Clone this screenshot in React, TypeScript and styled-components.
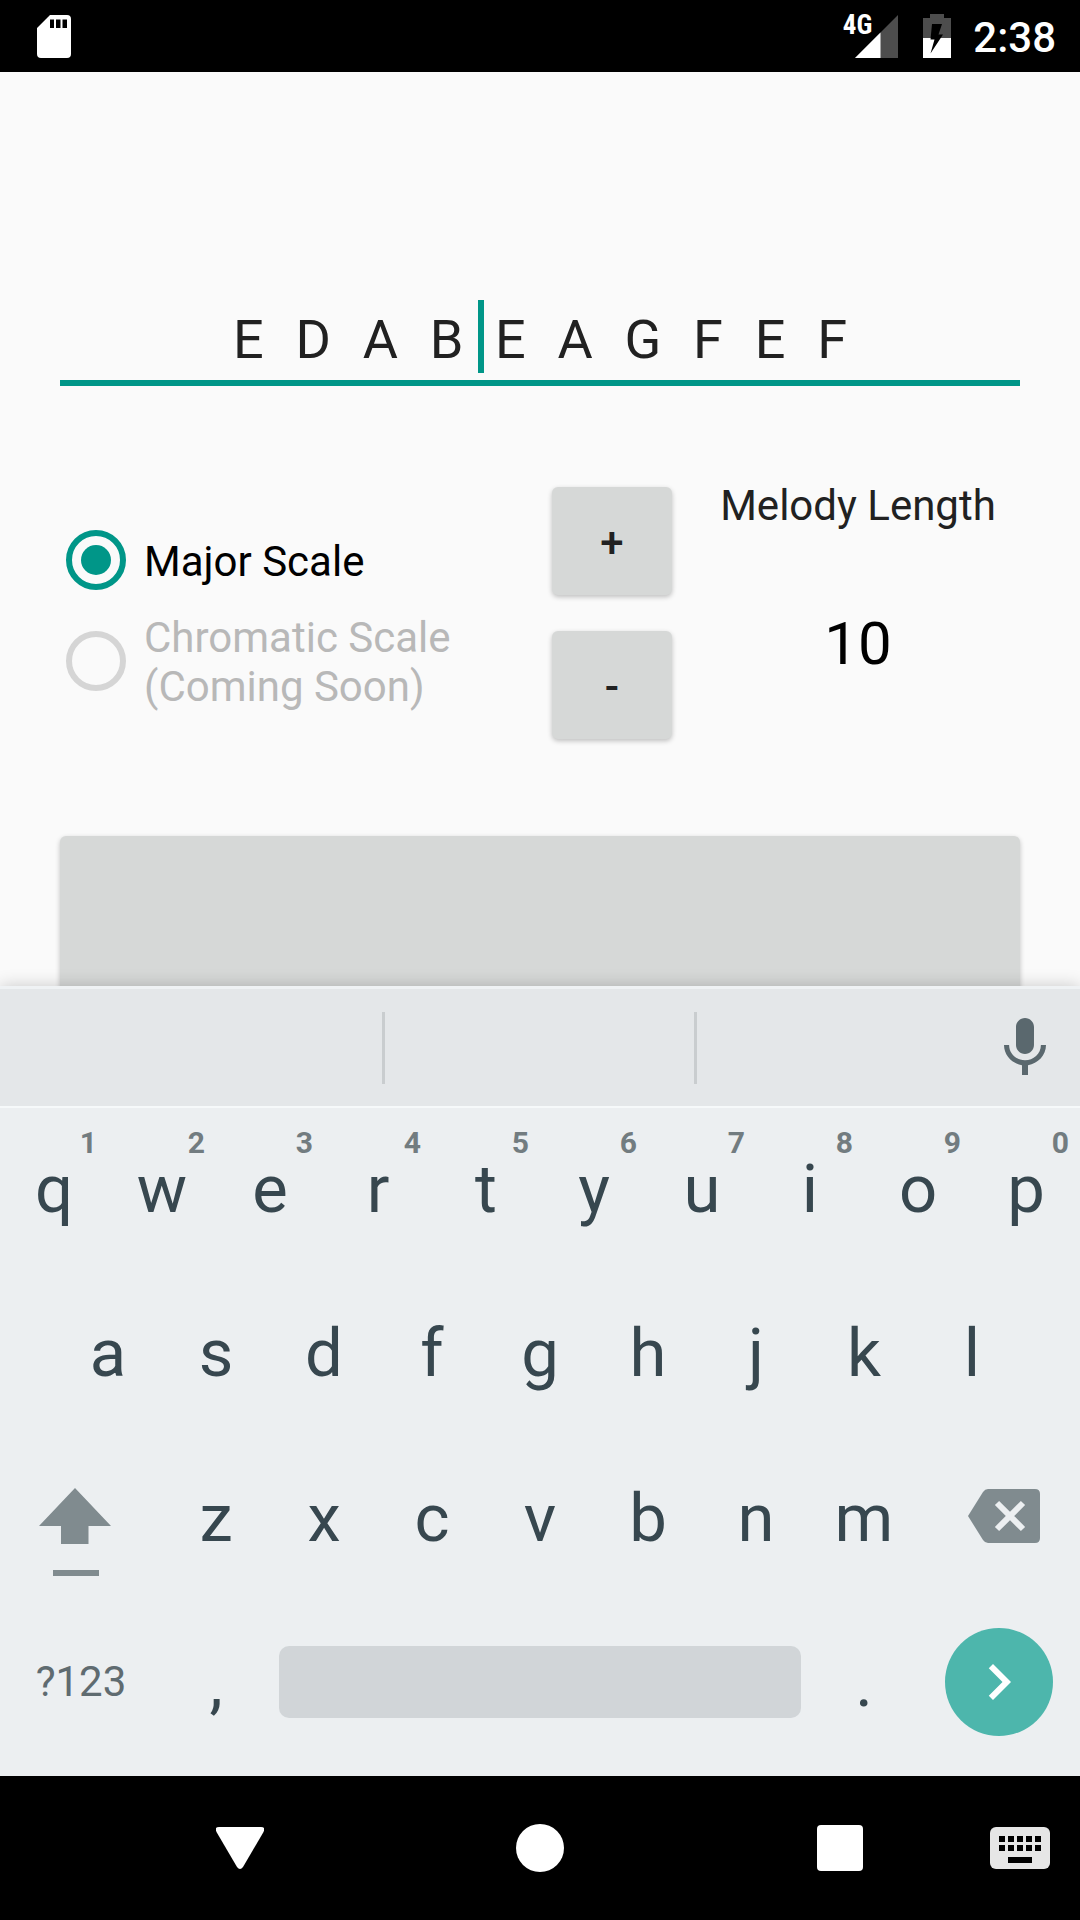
import React from "react";
import styled, { createGlobalStyle } from "styled-components";

const GlobalStyle = createGlobalStyle`
  *, *::before, *::after { box-sizing: border-box; }
  body { margin: 0; background: #fafafa; }
  button, input, output, label { font-family: Roboto, "Noto Sans", sans-serif; }
  button { border: 0; padding: 0; background: none; color: inherit; cursor: pointer; }
  svg { display: block; }
`;

const Screen = styled.div`
  height: 100vh;
  display: flex;
  flex-direction: column;
  overflow: hidden;
  background: #fafafa;
  font-family: Roboto, "Noto Sans", sans-serif;
`;

/* Status bar */
const StatusBar = styled.header`
  flex: none;
  height: 72px;
  padding: 0 24px 0 37px;
  display: flex;
  align-items: center;
  justify-content: space-between;
  background: #000;
  color: #fff;
`;
const StatusIcons = styled.div`
  display: flex;
  align-items: center;
  gap: 24px;
`;
const Signal = styled.div`
  position: relative;
  margin-right: 1px;
`;
const NetworkType = styled.span`
  position: absolute;
  right: 26px;
  top: -4px;
  font-family: "Roboto Condensed", Roboto, sans-serif;
  font-size: 27px;
  line-height: 28px;
  font-weight: 700;
`;
const Clock = styled.time`
  padding-top: 3px;
  margin-left: -2px;
  font-size: 42px;
  line-height: 50px;
  font-weight: 500;
`;

/* App content */
const Content = styled.main`
  flex: 1;
  min-height: 0;
  overflow: hidden;
  padding: 228px 60px 0;
`;
const MelodyField = styled.div`
  position: relative;
  border-bottom: 6px solid #009688;
`;
const MelodyInput = styled.input`
  display: block;
  width: 100%;
  height: 80px;
  padding: 0 0 2px;
  border: 0;
  outline: 0;
  background: transparent;
  color: #212121;
  caret-color: transparent;
  font-size: 54px;
  text-align: center;
`;
const Caret = styled.span`
  position: absolute;
  left: calc(50% - 62px);
  top: 0;
  width: 6px;
  height: 73px;
  background: #009688;
`;
const Controls = styled.section`
  display: grid;
  grid-template-columns: 1fr 120px 324px;
  column-gap: 24px;
  margin-top: 95px;
`;
const ScaleOptions = styled.div`
  display: flex;
  flex-direction: column;
  gap: 3px;
  padding: 31px 0 0 6px;
`;
const ScaleOption = styled.label<{ $off?: boolean }>`
  display: flex;
  align-items: center;
  gap: 18px;
  min-height: 96px;
  color: ${(p) => (p.$off ? "#b8b8b8" : "#000")};
  font-size: 42px;
  line-height: 49px;
`;
const OptionText = styled.span`
  padding-top: 2px;
`;
const Radio = styled.input`
  appearance: none;
  flex: none;
  width: 60px;
  height: 60px;
  margin: 0;
  border: 6px solid #009688;
  border-radius: 50%;
  display: grid;
  place-items: center;
  &:checked::before {
    content: "";
    width: 30px;
    height: 30px;
    border-radius: 50%;
    background: #009688;
  }
  &:disabled { border-color: #d5d5d5; }
`;
const Stepper = styled.div`
  display: flex;
  flex-direction: column;
  gap: 36px;
  padding-top: 6px;
`;
const RaisedButton = styled.button<{ $height: number }>`
  display: block;
  width: 100%;
  height: ${(p) => p.$height}px;
  padding-top: 2px;
  border-radius: 6px;
  background: #d6d8d7;
  box-shadow: 0 2px 5px rgba(0, 0, 0, 0.24);
  color: #212121;
  font-size: 42px;
  font-weight: 500;
`;
const LengthPanel = styled.div`
  display: flex;
  flex-direction: column;
  align-items: center;
  gap: 79px;
`;
const LengthLabel = styled.label`
  color: #212121;
  font-size: 42px;
  line-height: 49px;
`;
const LengthValue = styled.output`
  color: #000;
  font-size: 60px;
  line-height: 70px;
`;
const PlayArea = styled.div`
  margin-top: 97px;
`;

/* Keyboard */
const Keyboard = styled.section`
  flex: none;
  position: relative;
  background: #eceff1;
  box-shadow: 0 0 16px rgba(0, 0, 0, 0.2);
  color: #37474f;
`;
const Suggestions = styled.div`
  display: grid;
  grid-template-columns: 385fr 312fr 383fr;
  align-items: center;
  height: 122px;
  border-top: 3px solid #eff2f4;
  border-bottom: 2px solid #f6f9fa;
  background: #e4e7e9;
`;
const Suggestion = styled.div<{ $last?: boolean }>`
  height: 72px;
  border-right: ${(p) => (p.$last ? "0" : "3px solid #c9cdcf")};
  display: flex;
  justify-content: flex-end;
  padding-right: ${(p) => (p.$last ? "19px" : "0")};
  color: #5a686e;
`;
const Keys = styled.div`
  padding-bottom: 12px;
`;
const KeyRow = styled.div<{ $first?: boolean; $inset?: boolean }>`
  display: flex;
  height: ${(p) => (p.$first ? 161 : 165)}px;
  padding: 0 ${(p) => (p.$inset ? "5%" : "0")} ${(p) => (p.$first ? 2 : 0)}px;
`;
const Key = styled.button<{ $span?: number; $small?: boolean }>`
  position: relative;
  flex: ${(p) => p.$span ?? 2} 1 0;
  min-width: 0;
  display: flex;
  align-items: center;
  justify-content: center;
  padding-top: ${(p) => (p.$small ? 0 : 2)}px;
  font-size: ${(p) => (p.$small ? 42 : 67)}px;
  color: ${(p) => (p.$small ? "#5f6b70" : "#37474f")};
`;
const KeyHint = styled.span`
  position: absolute;
  top: 17px;
  right: 11px;
  color: #727c80;
  font-size: 30px;
  line-height: 36px;
  font-weight: 700;
`;
const SpaceBar = styled.span`
  width: 100%;
  height: 72px;
  margin: 0 9px;
  border-radius: 10px;
  background: #d1d5d8;
`;
const EnterDisc = styled.span`
  display: grid;
  place-items: center;
  width: 108px;
  height: 108px;
  border-radius: 50%;
  background: #4db6ac;
`;

/* Navigation bar */
const NavBar = styled.nav`
  flex: none;
  height: 144px;
  display: grid;
  grid-template-columns: 90px 1fr 1fr 1fr 90px;
  background: #000;
`;
const NavButton = styled.button<{ $start?: boolean }>`
  display: flex;
  align-items: center;
  justify-content: ${(p) => (p.$start ? "flex-start" : "center")};
`;

const SdCardIcon = () => (
  <svg width="34" height="43" viewBox="0 0 34 43" fill="#fff">
    <path
      fillRule="evenodd"
      d="M13 0H30Q34 0 34 4V39Q34 43 30 43H4Q0 43 0 39V13ZM13 4.500V13H17V4.500ZM19 4.500V13H23.500V4.500ZM25.500 4.500V13H30V4.500Z"
    />
  </svg>
);
const SignalIcon = () => (
  <svg width="43" height="43" viewBox="0 0 43 43">
    <path d="M43 0V43H0Z" fill="#4d4d4d" />
    <path d="M25.500 17.500V43H0Z" fill="#fff" />
  </svg>
);
const BatteryIcon = () => (
  <svg width="28" height="44" viewBox="0 0 28 44">
    <path d="M7 0H21V4H28V24H0V4H7Z" fill="#4d4d4d" />
    <path d="M0 24H28V44H0Z" fill="#fff" />
    <path d="M9 10H19L15.500 20.500H20L7.500 39.500L11.500 25.500H7.500Z" fill="#000" />
  </svg>
);
const MicIcon = () => (
  <svg width="72" height="72" viewBox="0 0 24 24" fill="currentColor">
    <path d="M12 14c1.660 0 2.990-1.340 2.990-3L15 5c0-1.660-1.340-3-3-3S9 3.340 9 5v6c0 1.660 1.340 3 3 3zm5.300-3c0 3-2.540 5.100-5.300 5.100S6.700 14 6.700 11H5c0 3.410 2.720 6.230 6 6.720V21h2v-3.280c3.280-.48 6-3.300 6-6.720h-1.700z" />
  </svg>
);
const ShiftIcon = () => (
  <svg width="84" height="118" viewBox="0 0 84 118" fill="#808b8f">
    <path d="M36 30L72 68H49.500V86H22V68H0Z" />
    <path d="M14 112H60V118H14Z" />
  </svg>
);
const BackspaceIcon = () => (
  <svg width="82" height="58" viewBox="-10 -1 82 58">
    <path d="M20 0H67Q72 0 72 5V49Q72 54 67 54H20Q17 54 15 51L0 27L15 3Q17 0 20 0Z" fill="#808b8f" />
    <path d="M29 14L55 40M55 14L29 40" stroke="#eceff1" strokeWidth="6" />
  </svg>
);
const ChevronIcon = () => (
  <svg width="72" height="72" viewBox="0 0 24 24" fill="#fff">
    <path d="M10 6L8.590 7.410 13.170 12l-4.580 4.590L10 18l6-6z" />
  </svg>
);
const BackIcon = () => (
  <svg width="48" height="42" viewBox="0 0 48 42" fill="#fff">
    <path d="M3 0H45Q50 0 47.500 5L27 40Q24 44 21 40L0.500 5Q-2 0 3 0Z" />
  </svg>
);
const HomeIcon = () => (
  <svg width="48" height="48" viewBox="0 0 48 48" fill="#fff">
    <circle cx="24" cy="24" r="24" />
  </svg>
);
const RecentsIcon = () => (
  <svg width="46" height="46" viewBox="0 0 46 46" fill="#fff">
    <rect width="46" height="46" rx="4" />
  </svg>
);
const ImeIcon = () => (
  <svg width="60" height="42" viewBox="0 0 60 42">
    <rect width="60" height="42" rx="6" fill="#e6e6e6" />
    {[9, 18].map((y) =>
      [9, 18, 27, 36, 45].map((x) => <rect key={`${x}-${y}`} x={x} y={y} width="6" height="6" />)
    )}
    <rect x="18" y="30" width="24" height="6" />
  </svg>
);

const NOTES = ["E", "D", "A", "B", "E", "A", "G", "F", "E", "F"];
const NOTE_GAP = "\u2004 ";
const TOP_ROW = "qwertyuiop".split("");
const HOME_ROW = "asdfghjkl".split("");
const BOTTOM_ROW = "zxcvbnm".split("");

export default function App() {
  return (
    <Screen>
      <GlobalStyle />
      <StatusBar>
        <SdCardIcon />
        <StatusIcons>
          <Signal>
            <SignalIcon />
            <NetworkType>4G</NetworkType>
          </Signal>
          <BatteryIcon />
          <Clock>2:38</Clock>
        </StatusIcons>
      </StatusBar>

      <Content>
        <MelodyField>
          <MelodyInput type="text" aria-label="Melody" defaultValue={NOTES.join(NOTE_GAP)} />
          <Caret />
        </MelodyField>

        <Controls>
          <ScaleOptions role="radiogroup" aria-label="Scale">
            <ScaleOption>
              <Radio type="radio" name="scale" defaultChecked />
              <OptionText>Major Scale</OptionText>
            </ScaleOption>
            <ScaleOption $off>
              <Radio type="radio" name="scale" disabled />
              <OptionText>Chromatic Scale (Coming Soon)</OptionText>
            </ScaleOption>
          </ScaleOptions>
          <Stepper>
            <RaisedButton type="button" $height={108}>+</RaisedButton>
            <RaisedButton type="button" $height={108}>-</RaisedButton>
          </Stepper>
          <LengthPanel>
            <LengthLabel htmlFor="melody-length">Melody Length</LengthLabel>
            <LengthValue id="melody-length">10</LengthValue>
          </LengthPanel>
        </Controls>

        <PlayArea>
          <RaisedButton type="button" aria-label="Play" $height={300} />
        </PlayArea>
      </Content>

      <Keyboard aria-label="Keyboard">
        <Suggestions>
          <Suggestion />
          <Suggestion />
          <Suggestion $last>
            <button type="button" aria-label="Voice input">
              <MicIcon />
            </button>
          </Suggestion>
        </Suggestions>
        <Keys>
          <KeyRow $first>
            {TOP_ROW.map((letter, i) => (
              <Key key={letter} type="button">
                {letter}
                <KeyHint>{(i + 1) % 10}</KeyHint>
              </Key>
            ))}
          </KeyRow>
          <KeyRow $inset>
            {HOME_ROW.map((letter) => (
              <Key key={letter} type="button">{letter}</Key>
            ))}
          </KeyRow>
          <KeyRow>
            <Key type="button" $span={3} $small aria-label="Shift"><ShiftIcon /></Key>
            {BOTTOM_ROW.map((letter) => (
              <Key key={letter} type="button">{letter}</Key>
            ))}
            <Key type="button" $span={3} $small aria-label="Backspace"><BackspaceIcon /></Key>
          </KeyRow>
          <KeyRow>
            <Key type="button" $span={3} $small>?123</Key>
            <Key type="button">,</Key>
            <Key type="button" $span={10} $small aria-label="Space"><SpaceBar /></Key>
            <Key type="button">.</Key>
            <Key type="button" $span={3} $small aria-label="Next">
              <EnterDisc><ChevronIcon /></EnterDisc>
            </Key>
          </KeyRow>
        </Keys>
      </Keyboard>

      <NavBar aria-label="System">
        <span />
        <NavButton type="button" aria-label="Back"><BackIcon /></NavButton>
        <NavButton type="button" aria-label="Home"><HomeIcon /></NavButton>
        <NavButton type="button" aria-label="Recent apps"><RecentsIcon /></NavButton>
        <NavButton type="button" aria-label="Switch keyboard" $start><ImeIcon /></NavButton>
      </NavBar>
    </Screen>
  );
}
